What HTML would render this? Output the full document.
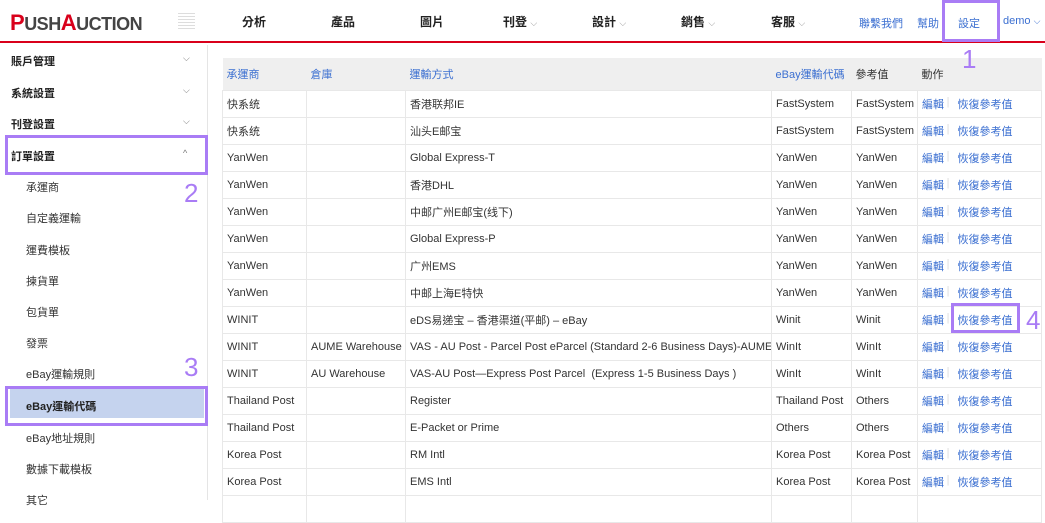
<!DOCTYPE html>
<html><head><meta charset="utf-8"><style>
*{margin:0;padding:0;box-sizing:border-box}
body{width:1045px;height:500px;overflow:hidden;background:#fff;font-family:"Liberation Sans","Noto Sans CJK TC",sans-serif;font-size:11px;color:#333;position:relative}
.hdr{position:absolute;left:0;top:0;width:1045px;height:43px;border-bottom:2px solid #d9001b}
.logo{position:absolute;left:10px;top:10px;font-size:18px;font-weight:bold;color:#444;letter-spacing:-0.5px}
.logo b{color:#d9001b;font-size:22px}
.burger{position:absolute;left:178px;top:13px;width:17px;height:17px;background:repeating-linear-gradient(#ddd 0 1px,#fff 1px 3px)}
.nav{position:absolute;top:13px;font-size:12px;font-weight:bold;color:#222}
.nav small{font-weight:normal;color:#999;font-size:9px}
.lnk{position:absolute;top:15px;font-size:11px;color:#3b6fd1}
.side{position:absolute;left:0;top:45px;width:208px;height:455px;border-right:1px solid #e5e5e5}
.si{position:absolute;left:11px;font-size:11px;color:#222;font-weight:bold}
.si i{position:absolute;left:172px;font-style:normal;font-weight:normal;color:#777;font-size:9px}
.sub{position:absolute;left:26px;font-size:11px;color:#333}
.box{position:absolute;border:3px solid #a97cf5}
.num{position:absolute;font-size:26px;color:#a97cf5}
table{position:absolute;left:222px;top:58px;border-collapse:collapse;table-layout:fixed;width:819px}
td{height:27px;border:1px solid #e8e8e8;padding:0 4px;white-space:nowrap;overflow:hidden;font-size:11px;color:#333}
tr.h td{background:#efefef;height:32px;border:none;color:#3b6fd1}
tr.h td.k{color:#333}
td.a{color:#3b6fd1;border-right:none}
td.b{color:#3b6fd1;border-left:none}
td.a span{float:right;color:#ddd}
</style></head><body>
<div class="hdr">
<div class="logo"><b>P</b>USH<b>A</b>UCTION</div>
<div class="burger"></div>
<div class="nav" style="left:242px">分析</div>
<div class="nav" style="left:331px">產品</div>
<div class="nav" style="left:420px">圖片</div>
<div class="nav" style="left:503px">刊登 <small>⌵</small></div>
<div class="nav" style="left:592px">設計 <small>⌵</small></div>
<div class="nav" style="left:681px">銷售 <small>⌵</small></div>
<div class="nav" style="left:771px">客服 <small>⌵</small></div>
<div class="lnk" style="left:859px">聯繫我們</div>
<div class="lnk" style="left:917px">幫助</div>
<div class="lnk" style="left:958px">設定</div>
<div class="lnk" style="left:1003px">demo <small style="font-size:9px">⌵</small></div>
</div>
<div class="side">
<div style="position:absolute;left:10px;top:341px;width:194px;height:32px;background:#c5d3ee"></div>
</div>
<div class="si" style="top:53px">賬戶管理<i>⌵</i></div>
<div class="si" style="top:85px">系統設置<i>⌵</i></div>
<div class="si" style="top:116px">刊登設置<i>⌵</i></div>
<div class="si" style="top:148px">訂單設置<i>^</i></div>
<div class="sub" style="top:179px">承運商</div>
<div class="sub" style="top:210px">自定義運輸</div>
<div class="sub" style="top:242px">運費模板</div>
<div class="sub" style="top:273px">揀貨單</div>
<div class="sub" style="top:304px">包貨單</div>
<div class="sub" style="top:335px">發票</div>
<div class="sub" style="top:366px">eBay運輸規則</div>
<div class="sub" style="top:398px;font-weight:bold;color:#222">eBay運輸代碼</div>
<div class="sub" style="top:430px">eBay地址規則</div>
<div class="sub" style="top:461px">數據下載模板</div>
<div class="sub" style="top:492px">其它</div>
<table>
<colgroup><col style="width:84px"><col style="width:99px"><col style="width:366px"><col style="width:80px"><col style="width:66px"><col style="width:36px"><col style="width:88px"></colgroup>
<tr class="h"><td style="height:31px">承運商</td><td>倉庫</td><td>運輸方式</td><td>eBay運輸代碼</td><td class="k">參考值</td><td class="k" colspan="2">動作</td></tr>
<tr><td>快系统</td><td></td><td>香港联邦IE</td><td>FastSystem</td><td>FastSystem</td><td class="a">編輯<span>|</span></td><td class="b">恢復參考值</td></tr>
<tr><td>快系统</td><td></td><td>汕头E邮宝</td><td>FastSystem</td><td>FastSystem</td><td class="a">編輯<span>|</span></td><td class="b">恢復參考值</td></tr>
<tr><td>YanWen</td><td></td><td>Global Express-T</td><td>YanWen</td><td>YanWen</td><td class="a">編輯<span>|</span></td><td class="b">恢復參考值</td></tr>
<tr><td>YanWen</td><td></td><td>香港DHL</td><td>YanWen</td><td>YanWen</td><td class="a">編輯<span>|</span></td><td class="b">恢復參考值</td></tr>
<tr><td>YanWen</td><td></td><td>中邮广州E邮宝(线下)</td><td>YanWen</td><td>YanWen</td><td class="a">編輯<span>|</span></td><td class="b">恢復參考值</td></tr>
<tr><td>YanWen</td><td></td><td>Global Express-P</td><td>YanWen</td><td>YanWen</td><td class="a">編輯<span>|</span></td><td class="b">恢復參考值</td></tr>
<tr><td>YanWen</td><td></td><td>广州EMS</td><td>YanWen</td><td>YanWen</td><td class="a">編輯<span>|</span></td><td class="b">恢復參考值</td></tr>
<tr><td>YanWen</td><td></td><td>中邮上海E特快</td><td>YanWen</td><td>YanWen</td><td class="a">編輯<span>|</span></td><td class="b">恢復參考值</td></tr>
<tr><td>WINIT</td><td></td><td>eDS易递宝 – 香港渠道(平邮) – eBay</td><td>Winit</td><td>Winit</td><td class="a">編輯<span>|</span></td><td class="b">恢復參考值</td></tr>
<tr><td>WINIT</td><td>AUME Warehouse</td><td>VAS - AU Post - Parcel Post eParcel (Standard 2-6 Business Days)-AUME</td><td>WinIt</td><td>WinIt</td><td class="a">編輯<span>|</span></td><td class="b">恢復參考值</td></tr>
<tr><td>WINIT</td><td>AU Warehouse</td><td>VAS-AU Post—Express Post Parcel &nbsp;(Express 1-5 Business Days )</td><td>WinIt</td><td>WinIt</td><td class="a">編輯<span>|</span></td><td class="b">恢復參考值</td></tr>
<tr><td>Thailand Post</td><td></td><td>Register</td><td>Thailand Post</td><td>Others</td><td class="a">編輯<span>|</span></td><td class="b">恢復參考值</td></tr>
<tr><td>Thailand Post</td><td></td><td>E-Packet or Prime</td><td>Others</td><td>Others</td><td class="a">編輯<span>|</span></td><td class="b">恢復參考值</td></tr>
<tr><td>Korea Post</td><td></td><td>RM Intl</td><td>Korea Post</td><td>Korea Post</td><td class="a">編輯<span>|</span></td><td class="b">恢復參考值</td></tr>
<tr><td>Korea Post</td><td></td><td>EMS Intl</td><td>Korea Post</td><td>Korea Post</td><td class="a">編輯<span>|</span></td><td class="b">恢復參考值</td></tr>
<tr><td></td><td></td><td></td><td></td><td></td><td class="a"></td><td class="b"></td></tr>
</table>
<div class="box" style="left:942px;top:0;width:58px;height:42px"></div>
<div class="box" style="left:5px;top:135px;width:203px;height:40px"></div>
<div class="box" style="left:5px;top:386px;width:203px;height:40px"></div>
<div class="box" style="left:951px;top:303px;width:69px;height:30px"></div>
<div class="num" style="left:962px;top:44px">1</div>
<div class="num" style="left:184px;top:178px">2</div>
<div class="num" style="left:184px;top:352px">3</div>
<div class="num" style="left:1026px;top:305px">4</div>
</body></html>
